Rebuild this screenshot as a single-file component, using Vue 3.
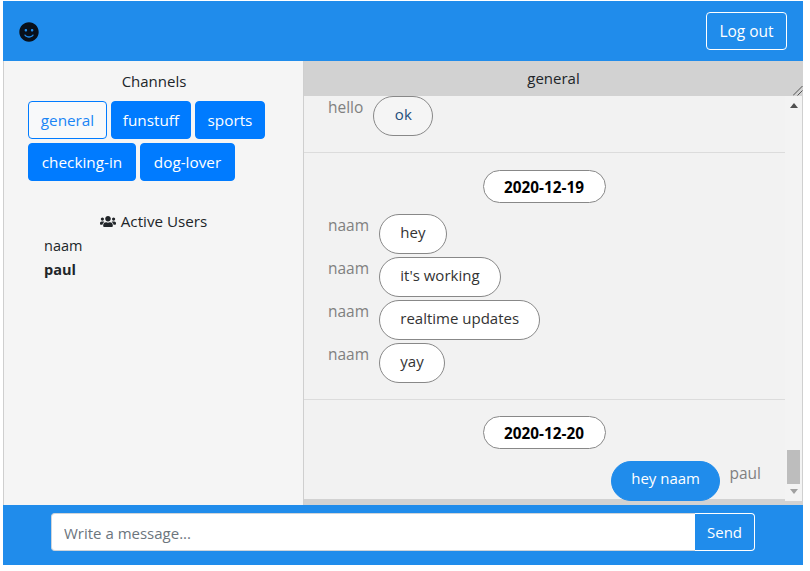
<script setup>
const channels = [
  { name: 'general', width: 79, active: true },
  { name: 'funstuff', width: 80 },
  { name: 'sports', width: 70 },
  { name: 'checking-in', width: 108 },
  { name: 'dog-lover', width: 95 },
]
const groupOne = ['hey', "it's working", 'realtime updates', 'yay']
</script>

<template>
  <div class="page">
    <header class="topbar">
      <svg class="smile" viewBox="0 0 496 512" aria-hidden="true">
        <path fill="#08101a" d="M248 8C111 8 0 119 0 256s111 248 248 248 248-111 248-248S385 8 248 8zm80 168c17.7 0 32 14.3 32 32s-14.3 32-32 32-32-14.3-32-32 14.3-32 32-32zm-160 0c17.7 0 32 14.3 32 32s-14.3 32-32 32-32-14.3-32-32 14.3-32 32-32zm194.8 170.2C334.3 380.4 292.5 400 248 400s-86.3-19.6-114.8-53.8c-13.6-16.3 11-36.7 24.6-20.5 22.4 26.9 55.2 42.2 90.2 42.2s67.8-15.4 90.2-42.2c13.4-16.2 38.1 4.2 24.6 20.5z"/>
      </svg>
      <button class="logout">Log out</button>
    </header>

    <main class="body">
      <aside class="side">
        <div class="side-title">Channels</div>
        <div class="chips">
          <button v-for="c in channels" :key="c.name" class="chip" :class="{ active: c.active }" :style="{ width: c.width + 'px' }">{{ c.name }}</button>
        </div>
        <div class="users-title">
          <svg class="users" viewBox="0 0 640 512" aria-hidden="true">
            <path fill="#212529" d="M96 224c35.3 0 64-28.7 64-64s-28.7-64-64-64-64 28.7-64 64 28.7 64 64 64zm448 0c35.3 0 64-28.7 64-64s-28.7-64-64-64-64 28.7-64 64 28.7 64 64 64zm32 32h-64c-17.6 0-33.5 7.1-45.1 18.6 40.3 22.1 68.9 62 75.1 109.4h66c17.7 0 32-14.3 32-32v-32c0-35.3-28.7-64-64-64zm-256 0c61.9 0 112-50.1 112-112S381.9 32 320 32 208 82.1 208 144s50.1 112 112 112zm76.8 32h-8.3c-20.8 10-43.9 16-68.5 16s-47.6-6-68.5-16h-8.3C179.6 288 128 339.6 128 403.2V432c0 26.5 21.5 48 48 48h288c26.5 0 48-21.5 48-48v-28.8c0-63.6-51.6-115.2-115.2-115.2zm-223.7-13.4C161.5 263.1 145.6 256 128 256H64c-35.3 0-64 28.7-64 64v32c0 17.7 14.3 32 32 32h65.9c6.3-47.4 34.9-87.3 75.2-109.4z"/>
          </svg>
          <span>Active Users</span>
        </div>
        <ul class="user-list">
          <li>naam</li>
          <li class="me">paul</li>
        </ul>
      </aside>

      <section class="chat">
        <div class="chat-head">
          general
          <svg class="grip" viewBox="0 0 10 10" aria-hidden="true">
            <path d="M0 9.5 9.5 0M4.5 9.5 9.5 4.5" stroke="#555" stroke-width="1" fill="none"/>
          </svg>
        </div>
        <div class="chat-main">
          <div class="log">
            <div class="row">
              <span class="who">hello</span>
              <span class="bubble ok">ok</span>
            </div>
            <hr class="rule" />
            <div class="date"><span>2020-12-19</span></div>
            <div class="stack">
              <div v-for="m in groupOne" :key="m" class="row">
                <span class="who">naam</span>
                <span class="bubble">{{ m }}</span>
              </div>
            </div>
            <hr class="rule second" />
            <div class="date"><span>2020-12-20</span></div>
            <div class="row mine">
              <span class="bubble own">hey naam</span>
              <span class="who">paul</span>
            </div>
          </div>
          <div class="scroll">
            <svg class="arrow up" viewBox="0 0 8 5" aria-hidden="true"><path d="M0 5 4 0 8 5Z" fill="#505050"/></svg>
            <div class="track"><div class="thumb"></div></div>
            <svg class="arrow down" viewBox="0 0 8 5" aria-hidden="true"><path d="M0 0 4 5 8 0Z" fill="#a0a0a0"/></svg>
          </div>
        </div>
      </section>
    </main>

    <footer class="composer">
      <div class="field">
        <input class="input" placeholder="Write a message..." />
        <button class="send">Send</button>
      </div>
    </footer>
  </div>
</template>

<style>
html, body { margin: 0; background: #fff; }
</style>

<style scoped>
* { box-sizing: border-box; }
.page {
  width: 810px;
  height: 571px;
  padding: 1px 7px 6px 3px;
  display: flex;
  flex-direction: column;
  font-family: "Open Sans", "Noto Sans", sans-serif;
  font-size: 15px;
  color: #212529;
  overflow: hidden;
}
button { font-family: inherit; font-size: inherit; cursor: pointer; }
.topbar {
  height: 60px;
  flex: none;
  background: #208ceb;
  display: flex;
  align-items: center;
  justify-content: space-between;
  padding: 0 16px 0 16px;
}
.smile { width: 20px; height: 20px; margin-top: 2px; }
.logout {
  width: 81px;
  height: 38px;
  background: transparent;
  border: 1px solid #fff;
  border-radius: 4px;
  color: #fff;
  padding: 0;
  font-size: 15.5px;
}
.body { flex: 1; display: flex; min-height: 0; }
.side {
  width: 301px;
  flex: none;
  background: #f5f5f5;
  border-left: 1px solid #cfcfcf;
  border-right: 1px solid #cfcfcf;
  padding: 10px 24px 0;
}
.side-title { text-align: center; line-height: 20px; height: 30px; padding-left: 1px; font-size: 15px; }
.chips { display: flex; flex-wrap: wrap; gap: 4px; width: 245px; }
.chip {
  height: 38px;
  padding: 0;
  border: 1px solid #007bff;
  border-radius: 4px;
  background: #007bff;
  color: #fff;
  font-size: 15.3px;
}
.chip.active { background: #f8f9fa; color: #1a85f5; }
.users-title {
  margin-top: 28px;
  margin-bottom: 1px;
  display: flex;
  justify-content: center;
  align-items: center;
  gap: 5px;
  height: 24px;
  font-size: 15.2px;
}
.users { width: 16px; height: 13px; }
.user-list { list-style: none; margin: 0; padding: 0 0 0 16px; line-height: 24px; font-size: 14.5px; }
.me { font-weight: 700; }
.chat { flex: 1; min-width: 0; display: flex; flex-direction: column; background: #d2d2d2; }
.chat-head {
  position: relative;
  height: 35px;
  flex: none;
  text-align: center;
  line-height: 35px;
  font-size: 15px;
}
.grip { position: absolute; right: 0; bottom: 0; width: 10px; height: 10px; }
.chat-main { display: flex; height: 403px; flex: none; }
.log { flex: 1; min-width: 0; background: #f2f2f2; padding: 0 0 0 24px; }
.row { display: flex; align-items: flex-start; gap: 10px; }
.who { color: #808080; line-height: 22px; font-size: 15.5px; }
.bubble {
  display: inline-block;
  height: 40px;
  line-height: 34px;
  padding: 0 20.2px;
  background: #fff;
  border: 1px solid #888;
  border-radius: 20px;
  font-size: 15px;
  color: #333;
}
.bubble.ok { background: #f5f5f5; color: #1d4f7c; padding: 0 20.5px; }
.stack { display: flex; flex-direction: column; gap: 3px; }
.rule { border: 0; border-top: 1px solid #dcdcdc; margin: 16px 0 17px -24px; }
.rule.second { margin-bottom: 16px; }
.date { display: flex; justify-content: center; margin: 0 0 11px; padding-right: 25px; }
.date span {
  height: 33px;
  width: 123px;
  text-align: center;
  line-height: 32px;
  background: #fff;
  border: 1px solid #888;
  border-radius: 17px;
  font-weight: 700;
  font-size: 15.3px;
  color: #000;
}
.mine { justify-content: flex-end; padding-right: 24px; margin-top: 12px; gap: 9px; }
.mine .who { margin-top: 1px; }
.bubble.own { background: #208ceb; border-color: #208ceb; color: #fff; padding: 0 19.5px; line-height: 32px; }
.scroll {
  width: 18px;
  flex: none;
  height: 405px;
  background: #f3f3f3;
  border-right: 1px solid #cfcfcf;
  display: flex;
  flex-direction: column;
  align-items: center;
}
.arrow { width: 8px; height: 5px; flex: none; }
.arrow.up { margin: 7px 0; }
.arrow.down { margin: 5px 0 7px; }
.track { flex: 1; position: relative; width: 100%; }
.thumb { position: absolute; left: 2px; width: 13px; bottom: 0; height: 34px; background: #bdbdbd; }
.composer {
  height: 60px;
  flex: none;
  background: #208ceb;
  display: flex;
  justify-content: flex-start;
  align-items: flex-start;
  padding: 8px 0 0 48px;
}
.field { display: flex; width: 704px; height: 38px; }
.input {
  flex: 1;
  min-width: 0;
  border: 1px solid #ced4da;
  border-right: 0;
  border-radius: 4px 0 0 4px;
  padding: 2px 12px 0;
  font-family: inherit;
  font-size: 15px;
  outline: none;
  background: #fff;
}
.input::placeholder { color: #6c757d; opacity: 1; }
.send {
  width: 60px;
  flex: none;
  background: transparent;
  border: 1px solid #fff;
  border-left: 0;
  border-radius: 0 4px 4px 0;
  color: #fff;
  padding: 0;
}
</style>
